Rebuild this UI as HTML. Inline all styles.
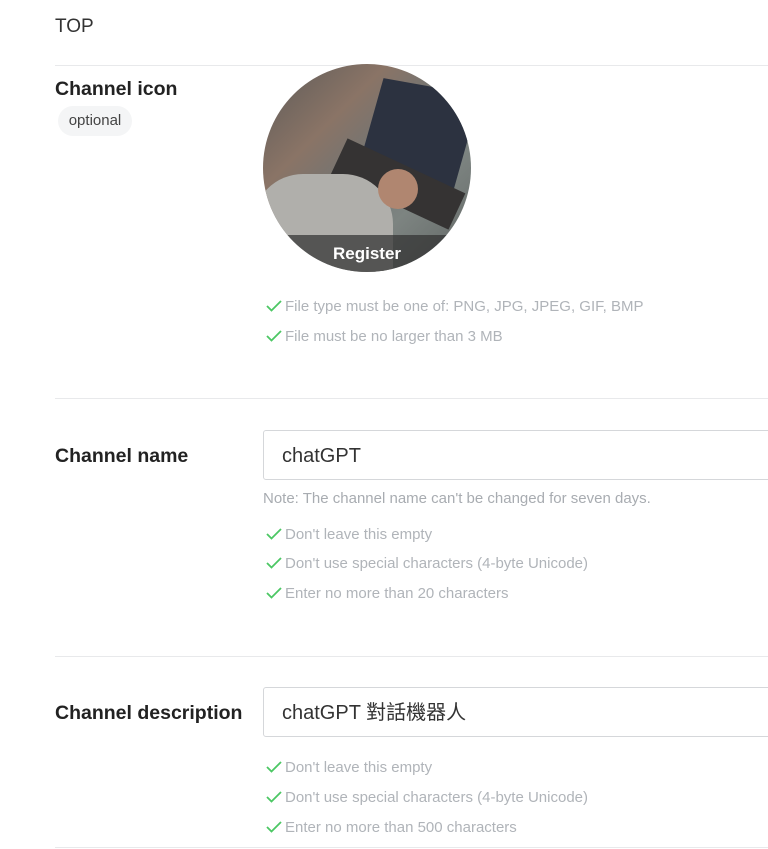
<!DOCTYPE html>
<html><head><meta charset="utf-8"><style>
body{margin:0;width:768px;height:849px;overflow:hidden;background:#fff;font-family:"Liberation Sans","Noto Sans CJK TC",sans-serif;position:relative;color:#333}
.a{position:absolute}
.hr{position:absolute;left:55px;right:0;height:1px;background:#e8e9eb}
.lbl{position:absolute;left:55px;font-size:19.5px;font-weight:bold;color:#222}
.chk{position:absolute;left:266px;font-size:15px;color:#b0b4b9;white-space:nowrap}
.chk svg{vertical-align:-1px;margin-right:3px}
.inp{position:absolute;left:263px;right:-4px;height:50px;border:1px solid #d5d7da;border-radius:3px;font-size:20px;color:#333;line-height:50px;padding-left:18px;box-sizing:border-box}
</style></head><body>
<div class="a" style="left:55px;top:16px;font-size:19px;color:#333">TOP</div>
<div class="hr" style="top:65px"></div>
<div class="lbl" style="top:78px">Channel icon</div>
<div class="a" style="left:58px;top:106px;width:74px;height:30px;border-radius:15px;background:#f4f5f6;font-size:15px;line-height:30px;text-align:center;color:#444">optional</div>
<div class="a" style="left:263px;top:64px;width:208px;height:208px;border-radius:50%;overflow:hidden;background:linear-gradient(135deg,#5c5a58 0%,#8a7466 30%,#707574 50%,#7d8481 70%,#5f6463 100%)">
<div class="a" style="left:105px;top:22px;width:100px;height:100px;background:#2c3240;transform:skew(-6deg) rotate(10deg)"></div>
<div class="a" style="left:70px;top:100px;width:130px;height:40px;background:#353333;transform:rotate(25deg)"></div>
<div class="a" style="left:-10px;top:110px;width:140px;height:110px;background:#b0afab;border-radius:50px 50px 0 0"></div>
<div class="a" style="left:115px;top:105px;width:40px;height:40px;background:#b08670;border-radius:50%"></div>
<div class="a" style="left:0;top:171px;width:208px;height:37px;background:rgba(50,50,50,.72);color:#fff;font-weight:bold;font-size:17px;text-align:center;line-height:38px">Register</div>
</div>
<div class="chk" style="top:298px"><svg width="16" height="12" viewBox="0 0 16 12"><path d="M1 6l4.5 4.5L15 1" fill="none" stroke="#4cc764" stroke-width="1.8"/></svg>File type must be one of: PNG, JPG, JPEG, GIF, BMP</div>
<div class="chk" style="top:328px"><svg width="16" height="12" viewBox="0 0 16 12"><path d="M1 6l4.5 4.5L15 1" fill="none" stroke="#4cc764" stroke-width="1.8"/></svg>File must be no larger than 3 MB</div>
<div class="hr" style="top:398px"></div>
<div class="lbl" style="top:445px">Channel name</div>
<div class="inp" style="top:430px">chatGPT</div>
<div class="a" style="left:263px;top:490px;font-size:15px;color:#a8acb1">Note: The channel name can't be changed for seven days.</div>
<div class="chk" style="top:526px"><svg width="16" height="12" viewBox="0 0 16 12"><path d="M1 6l4.5 4.5L15 1" fill="none" stroke="#4cc764" stroke-width="1.8"/></svg>Don't leave this empty</div>
<div class="chk" style="top:555px"><svg width="16" height="12" viewBox="0 0 16 12"><path d="M1 6l4.5 4.5L15 1" fill="none" stroke="#4cc764" stroke-width="1.8"/></svg>Don't use special characters (4-byte Unicode)</div>
<div class="chk" style="top:585px"><svg width="16" height="12" viewBox="0 0 16 12"><path d="M1 6l4.5 4.5L15 1" fill="none" stroke="#4cc764" stroke-width="1.8"/></svg>Enter no more than 20 characters</div>
<div class="hr" style="top:656px"></div>
<div class="lbl" style="top:702px">Channel description</div>
<div class="inp" style="top:687px">chatGPT 對話機器人</div>
<div class="chk" style="top:759px"><svg width="16" height="12" viewBox="0 0 16 12"><path d="M1 6l4.5 4.5L15 1" fill="none" stroke="#4cc764" stroke-width="1.8"/></svg>Don't leave this empty</div>
<div class="chk" style="top:789px"><svg width="16" height="12" viewBox="0 0 16 12"><path d="M1 6l4.5 4.5L15 1" fill="none" stroke="#4cc764" stroke-width="1.8"/></svg>Don't use special characters (4-byte Unicode)</div>
<div class="chk" style="top:819px"><svg width="16" height="12" viewBox="0 0 16 12"><path d="M1 6l4.5 4.5L15 1" fill="none" stroke="#4cc764" stroke-width="1.8"/></svg>Enter no more than 500 characters</div>
<div class="hr" style="top:847px"></div>
</body></html>
